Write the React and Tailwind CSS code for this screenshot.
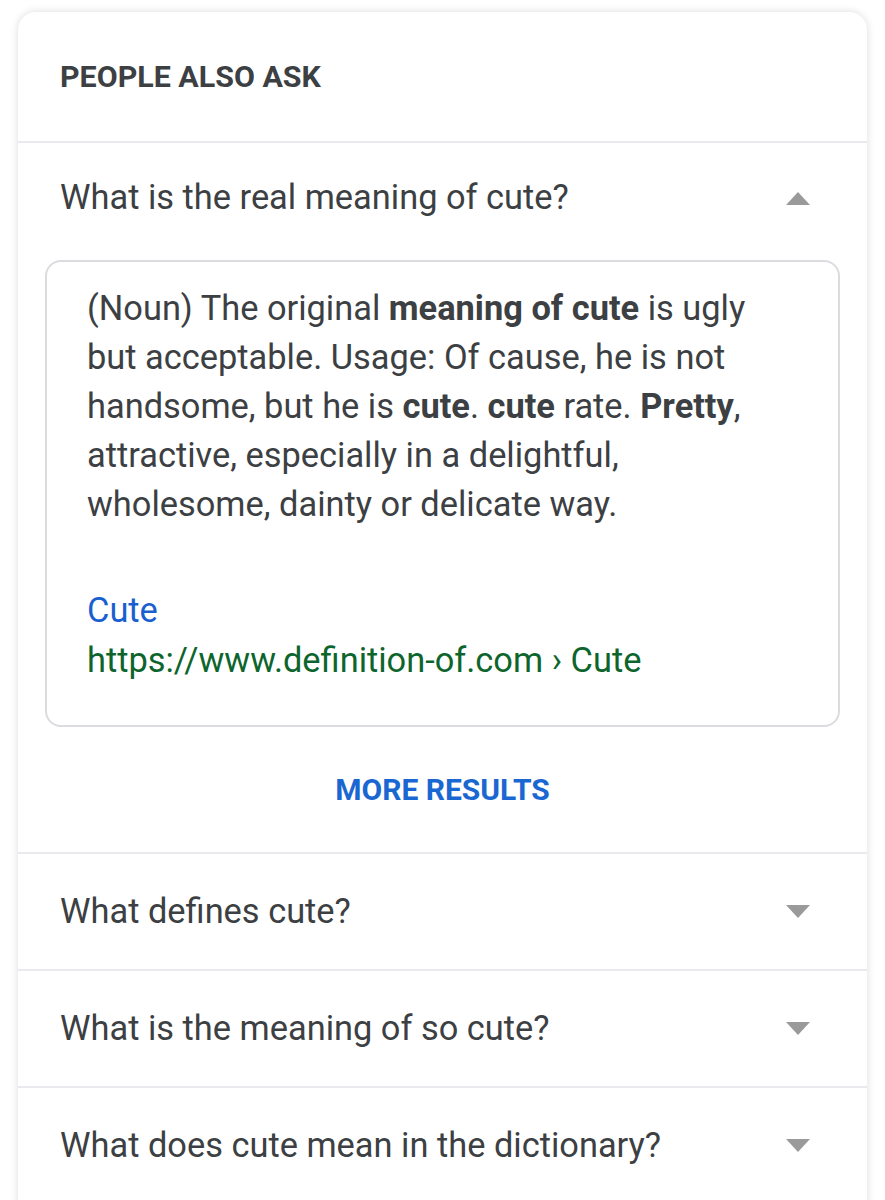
import React from "react";

const font = { fontFamily: "Roboto, 'Liberation Sans', sans-serif" };

function Caret({ up }) {
  return (
    <svg width="24" height="13" viewBox="0 0 24 13" className="shrink-0">
      <path d={up ? "M12 0 L24 13 L0 13 Z" : "M0 0 L24 0 L12 13 Z"} fill="#9a9a9a" />
    </svg>
  );
}

function QuestionRow({ text }) {
  return (
    <div className="h-[117px] flex items-center justify-between pl-[42px] pr-[57px] border-t-2 border-[#e8eaed]">
      <span className="text-[34.4px] text-[#3c4043]">{text}</span>
      <Caret />
    </div>
  );
}

export default function App() {
  return (
    <div className="min-h-[1200px] bg-white pt-3 px-[18px] overflow-hidden" style={font}>
      <div className="bg-white rounded-t-[18px] shadow-[0_0_8px_rgba(0,0,0,0.14)] pb-10">
        <div className="h-[129px] flex items-center pl-[42px]">
          <span className="text-[30.4px] font-bold text-[#3c4043]">PEOPLE ALSO ASK</span>
        </div>

        <div className="border-t-2 border-[#e8eaed]">
          <div className="h-[110px] flex items-center justify-between pl-[42px] pr-[57px]">
            <span className="text-[34.4px] text-[#3c4043]">What is the real meaning of cute?</span>
            <Caret up />
          </div>
          <div className="mx-[27px] mt-[7px] border-2 border-[#dadce0] rounded-[16px] pt-[22px] pb-[40px] pl-[40px] pr-[45px]">
            <p className="text-[34.4px] leading-[49px] text-[#3c4043]">
              (Noun) The original <b className="font-bold">meaning of cute</b> is ugly but acceptable. Usage: Of cause, he is not handsome, but he is <b className="font-bold">cute</b>. <b className="font-bold">cute</b> rate. <b className="font-bold">Pretty</b>, attractive, especially in a delightful, wholesome, dainty or delicate way.
            </p>
            <div className="mt-[56px] text-[34.4px] leading-[50px]">
              <div className="text-[#1a5fd0]">Cute</div>
              <div className="text-[#0d652d]">https://www.definition-of.com › Cute</div>
            </div>
          </div>
          <div className="h-[125px] flex items-center justify-center">
            <span className="text-[30px] font-bold text-[#1a67d2]">MORE RESULTS</span>
          </div>
        </div>

        <QuestionRow text="What defines cute?" />
        <QuestionRow text="What is the meaning of so cute?" />
        <QuestionRow text="What does cute mean in the dictionary?" />
      </div>
    </div>
  );
}
